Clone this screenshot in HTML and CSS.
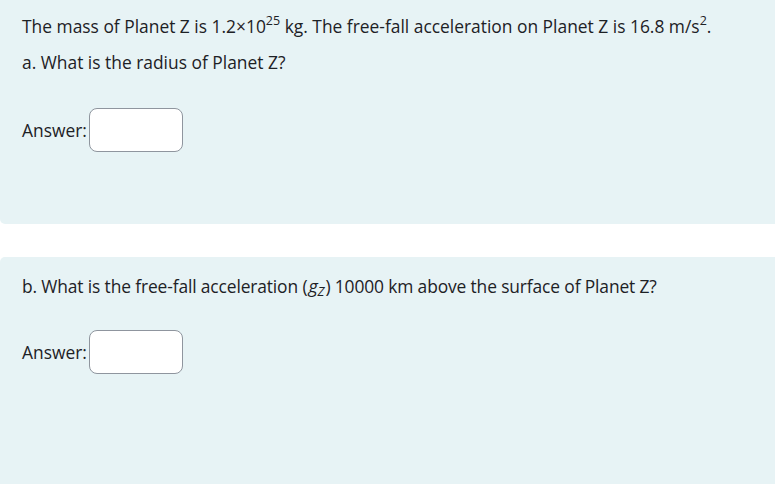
FILE: index.html
```html
<!DOCTYPE html>
<html>
<head>
<meta charset="utf-8">
<link rel="stylesheet" href="styles.css">
</head>
<body>
<div class="page">
  <section class="panel panel-first">
    <p class="qtext">The mass of Planet Z is 1.2×10<sup>25</sup> kg. The free-fall acceleration on Planet Z is 16.8 m/s<sup>2</sup>.</p>
    <p class="qtext">a. What is the radius of Planet Z?</p>
    <div class="answer">
      <label class="answer-label">Answer:</label>
      <span class="answer-box"></span>
    </div>
  </section>
  <section class="panel panel-second">
    <p class="qtext qtext-tight">b. What is the free-fall acceleration (<i class="math">g<sub>Z</sub></i>) 10000 km above the surface of Planet Z?</p>
    <div class="answer answer-second">
      <label class="answer-label">Answer:</label>
      <span class="answer-box"></span>
    </div>
  </section>
</div>
</body>
</html>
```

FILE: styles.css
```css
html, body {
  margin: 0;
  padding: 0;
  background: #ffffff;
}
body {
  font-family: "Open Sans", "Noto Sans", sans-serif;
  font-size: 17.4px;
  color: #1d2125;
  width: 775px;
  height: 484px;
  overflow: hidden;
}
.page {
  display: flex;
  flex-direction: column;
  gap: 33px;
}
.panel {
  background: #e7f3f5;
  padding: 0 0 0 22px;
  box-sizing: border-box;
  display: flex;
  flex-direction: column;
}
.panel-first {
  height: 224px;
  border-radius: 0 0 0 5px;
  padding-top: 13px;
}
.panel-second {
  height: 227px;
  border-radius: 5px 0 0 0;
  padding-top: 16px;
}
.qtext {
  margin: 0 0 10px 0;
  line-height: 26px;
}
.qtext-tight {
  letter-spacing: -0.13px;
}
sup {
  font-size: 12.5px;
  line-height: 0;
  vertical-align: 8px;
}
.math {
  font-style: italic;
  font-size: 18px;
  padding: 0 1px;
}
.math sub {
  font-size: 13px;
  line-height: 0;
  vertical-align: -3px;
}
.answer {
  display: flex;
  align-items: center;
  gap: 2px;
  margin-top: 23px;
}
.answer-second {
  margin-top: 21px;
}
.answer-label {
  line-height: 26px;
}
.answer-box {
  display: block;
  width: 92px;
  height: 42px;
  background: #ffffff;
  border: 1px solid #8f959e;
  border-radius: 8px;
}
```
